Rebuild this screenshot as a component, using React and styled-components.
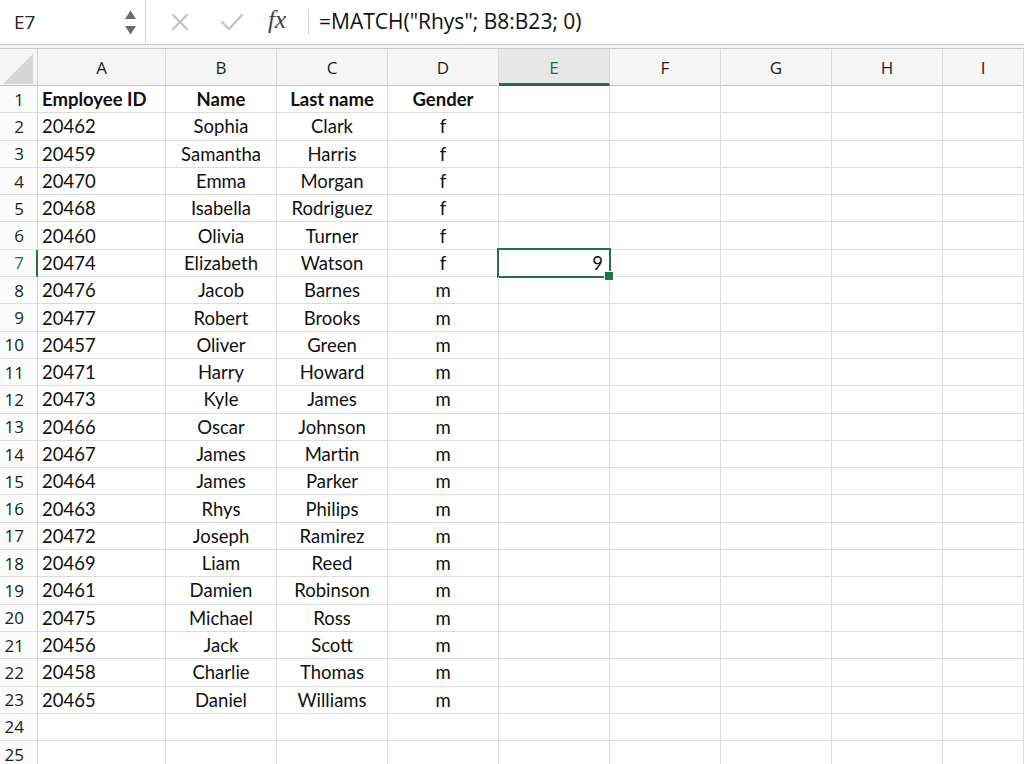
import React from 'react'
import styled, { createGlobalStyle, css } from 'styled-components'

const GlobalStyle = createGlobalStyle`
  html, body { margin: 0; padding: 0; background: #fff; overflow: hidden; }
  body { font-family: "Liberation Sans", Arial, sans-serif; }
`

const rows = [
  ['Employee ID', 'Name', 'Last name', 'Gender'],
  ['20462', 'Sophia', 'Clark', 'f'],
  ['20459', 'Samantha', 'Harris', 'f'],
  ['20470', 'Emma', 'Morgan', 'f'],
  ['20468', 'Isabella', 'Rodriguez', 'f'],
  ['20460', 'Olivia', 'Turner', 'f'],
  ['20474', 'Elizabeth', 'Watson', 'f'],
  ['20476', 'Jacob', 'Barnes', 'm'],
  ['20477', 'Robert', 'Brooks', 'm'],
  ['20457', 'Oliver', 'Green', 'm'],
  ['20471', 'Harry', 'Howard', 'm'],
  ['20473', 'Kyle', 'James', 'm'],
  ['20466', 'Oscar', 'Johnson', 'm'],
  ['20467', 'James', 'Martin', 'm'],
  ['20464', 'James', 'Parker', 'm'],
  ['20463', 'Rhys', 'Philips', 'm'],
  ['20472', 'Joseph', 'Ramirez', 'm'],
  ['20469', 'Liam', 'Reed', 'm'],
  ['20461', 'Damien', 'Robinson', 'm'],
  ['20475', 'Michael', 'Ross', 'm'],
  ['20456', 'Jack', 'Scott', 'm'],
  ['20458', 'Charlie', 'Thomas', 'm'],
  ['20465', 'Daniel', 'Williams', 'm'],
  [],
  [],
]

const columns = ['A', 'B', 'C', 'D', 'E', 'F', 'G', 'H', 'I']
const GREEN = '#217346'

export default function App() {
  return (
    <>
      <GlobalStyle />
      <Window>
        <FormulaBar>
          <NameBox>
            <NameText>E7</NameText>
            <Stepper>
              <svg width="13" height="10" viewBox="0 0 13 10"><path d="M6.5 0.5 L12 9 L1 9 Z" fill="#6b6b6b" /></svg>
              <svg width="13" height="10" viewBox="0 0 13 10"><path d="M1 1 L12 1 L6.5 9.5 Z" fill="#6b6b6b" /></svg>
            </Stepper>
          </NameBox>
          <Tools>
            <svg width="20" height="20" viewBox="0 0 20 20">
              <path d="M3 3 L17 17 M17 3 L3 17" stroke="#c4c4c4" strokeWidth="2.4" strokeLinecap="round" />
            </svg>
            <svg width="24" height="20" viewBox="0 0 24 20">
              <path d="M2 10 L9 17 L22 3" stroke="#c4c4c4" strokeWidth="2.4" fill="none" strokeLinecap="round" strokeLinejoin="round" />
            </svg>
            <Fx>fx</Fx>
          </Tools>
          <Divider />
          <Formula>=MATCH("Rhys"; B8:B23; 0)</Formula>
        </FormulaBar>
        <Band />
        <Grid>
          <Corner>
            <svg width="30" height="30" viewBox="0 0 30 30"><path d="M30 0 L30 30 L0 30 Z" fill="#d6d6d6" /></svg>
          </Corner>
          {columns.map(c => (
            <ColHead key={c} $active={c === 'E'}>{c}</ColHead>
          ))}
          {rows.map((r, i) => (
            <React.Fragment key={i}>
              <RowHead $active={i === 6}>{i + 1}</RowHead>
              {columns.map((c, j) => (
                <Cell
                  key={c}
                  $bold={i === 0}
                  $align={j === 0 ? 'left' : j < 4 ? 'center' : 'right'}
                  $selected={i === 6 && c === 'E'}
                >
                  {i === 6 && c === 'E' ? '9' : r[j] || ''}
                </Cell>
              ))}
            </React.Fragment>
          ))}
        </Grid>
      </Window>
    </>
  )
}

const Window = styled.div`
  width: 1024px;
  height: 764px;
  overflow: hidden;
  background: #fff;
`

const FormulaBar = styled.div`
  display: flex;
  align-items: center;
  box-sizing: border-box;
  height: 45px;
  border-bottom: 1px solid #c9c9c9;
`

const NameBox = styled.div`
  width: 146px;
  height: 100%;
  box-sizing: border-box;
  border-right: 1px solid #d4d4d4;
  display: flex;
  align-items: center;
  justify-content: space-between;
  padding: 0 8px 0 14px;
`

const NameText = styled.span`
  font-family: "Open Sans", "Noto Sans", sans-serif;
  font-size: 19px;
  color: #222;
`

const Stepper = styled.div`
  display: flex;
  flex-direction: column;
  gap: 5px;
  margin-top: 1px;
`

const Tools = styled.div`
  display: flex;
  align-items: center;
  gap: 30px;
  padding-left: 24px;
  width: 140px;
  box-sizing: border-box;
`

const Fx = styled.span`
  font-family: "Liberation Serif", "Times New Roman", serif;
  font-style: italic;
  font-size: 25px;
  color: #444;
  margin-left: -6px;
  margin-top: -4px;
`

const Divider = styled.div`
  width: 1px;
  height: 26px;
  background: #d2d2d2;
  margin: 0 10px 0 22px;
`

const Formula = styled.span`
  font-family: "Open Sans", "Noto Sans", sans-serif;
  font-size: 21px;
  color: #111;
  margin-top: -2px;
`

const Band = styled.div`
  height: 3px;
  background: #f4f4f4;
  border-bottom: 1px solid #c9c9c9;
`

const Grid = styled.div`
  display: grid;
  grid-template-columns: 38px 128px repeat(7, 111px) 1fr;
  grid-template-rows: 37px repeat(25, 27.3px);
`

const headBase = css`
  box-sizing: border-box;
  display: flex;
  align-items: center;
  font-family: "Open Sans", "Noto Sans", sans-serif;
  font-size: 17px;
  color: #1e1e1e;
`

const Corner = styled.div`
  ${headBase};
  background: #f5f5f5;
  border-right: 1px solid #d0d0d0;
  border-bottom: 1px solid #c4c4c4;
  padding: 3px 4px 0 3px;
  svg { display: block; }
`

const ColHead = styled.div`
  ${headBase};
  justify-content: center;
  background: ${p => (p.$active ? '#e7e7e7' : '#f5f5f5')};
  border-right: 1px solid #dadada;
  border-bottom: ${p => (p.$active ? `3px solid ${GREEN}` : '1px solid #c4c4c4')};
  color: ${p => (p.$active ? GREEN : '#1e1e1e')};
  padding-top: ${p => (p.$active ? '2px' : '0')};
`

const RowHead = styled.div`
  ${headBase};
  justify-content: flex-end;
  background: #fbfbfb;
  border-bottom: 1px solid #dcdcdc;
  border-right: ${p => (p.$active ? `2px solid ${GREEN}` : '1px solid #d0d0d0')};
  color: ${p => (p.$active ? GREEN : '#1e1e1e')};
  padding-right: ${p => (p.$active ? '12px' : '13px')};
`

const Cell = styled.div`
  position: relative;
  box-sizing: border-box;
  display: flex;
  align-items: center;
  justify-content: ${p => (p.$align === 'left' ? 'flex-start' : p.$align === 'center' ? 'center' : 'flex-end')};
  padding: 0 4px;
  border-right: 1px solid #dcdcdc;
  border-bottom: 1px solid #dcdcdc;
  font-family: Lato, "Open Sans", sans-serif;
  font-size: 18.5px;
  font-weight: ${p => (p.$bold ? 700 : 400)};
  color: #111;
  white-space: nowrap;
  ${p =>
    p.$selected &&
    css`
      padding-right: 6px;
      &::after {
        content: '';
        position: absolute;
        left: -2px;
        top: -2px;
        right: -2px;
        bottom: -2px;
        border: 2px solid ${GREEN};
        pointer-events: none;
      }
      &::before {
        content: '';
        position: absolute;
        right: -5px;
        bottom: -5px;
        width: 8px;
        height: 8px;
        background: ${GREEN};
        border: 1px solid #fff;
        z-index: 1;
      }
    `}
`
